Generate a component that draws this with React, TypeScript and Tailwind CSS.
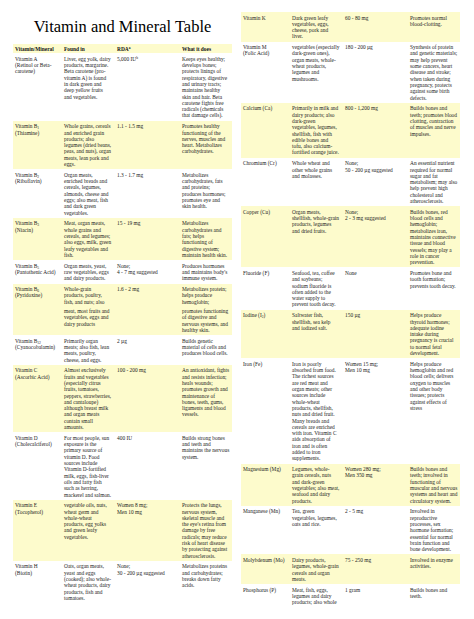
import type { ReactNode } from 'react';

type Line = string | ReactNode;
type Row = { cells: Line[][] };

const sub = (base: string, n: string, rest = '') => (
  <>
    {base}
    <span className="text-[3.6px] leading-none align-[-1px]">{n}</span>
    {rest}
  </>
);

const sup = (base: string, s: string) => (
  <>
    {base}
    <span className="text-[3.6px] leading-none align-[2px]">{s}</span>
  </>
);

// '' marks a small paragraph gap inside a cell
const leftRows: Row[] = [
  {
    cells: [
      ['Vitamin A', '(Retinol or Beta-', 'carotene)'],
      ['Liver, egg yolk, dairy', 'products, margarine.', 'Beta carotene (pro-', 'vitamin A) is found', 'in dark green and', 'deep yellow fruits', 'and vegetables.'],
      [sup('5,000 IU', 'b')],
      ['Keeps eyes healthy;', 'develops bones;', 'protects linings of', 'respiratory, digestive', 'and urinary tracts;', 'maintains healthy', 'skin and hair. Beta', 'carotene fights free', 'radicals (chemicals', 'that damage cells).'],
    ],
  },
  {
    cells: [
      [sub('Vitamin B', '1'), '(Thiamine)'],
      ['Whole grains, cereals', 'and enriched grain', 'products; also', 'legumes (dried beans,', 'peas, and nuts), organ', 'meats, lean pork and', 'eggs.'],
      ['1.1 - 1.5 mg'],
      ['Promotes healthy', 'functioning of the', 'nerves, muscles and', 'heart. Metabolizes', 'carbohydrates.'],
    ],
  },
  {
    cells: [
      [sub('Vitamin B', '2'), '(Riboflavin)'],
      ['Organ meats,', 'enriched breads and', 'cereals, legumes,', 'almonds, cheese and', 'eggs; also meat, fish', 'and dark green', 'vegetables.'],
      ['1.3 - 1.7 mg'],
      ['Metabolizes', 'carbohydrates, fats', 'and proteins;', 'produces hormones;', 'promotes eye and', 'skin health.'],
    ],
  },
  {
    cells: [
      [sub('Vitamin B', '3'), '(Niacin)'],
      ['Meat, organ meats,', 'whole grains and', 'cereals, and legumes;', 'also eggs, milk, green', 'leafy vegetables and', 'fish.'],
      ['15 - 19 mg'],
      ['Metabolizes', 'carbohydrates and', 'fats; helps', 'functioning of', 'digestive system;', 'maintain health skin.'],
    ],
  },
  {
    cells: [
      [sub('Vitamin B', '5'), '(Pantothenic Acid)'],
      ['Organ meats, yeast,', 'raw vegetables, eggs', 'and dairy products.'],
      ['None;', '4 - 7 mg suggested'],
      ['Produces hormones', "and maintains body's", 'immune system.'],
    ],
  },
  {
    cells: [
      [sub('Vitamin B', '6'), '(Pyridoxine)'],
      ['Whole-grain', 'products, poultry,', 'fish, and nuts; also', '', 'meat, most fruits and', 'vegetables, eggs and', 'dairy products'],
      ['1.6 - 2 mg'],
      ['Metabolizes protein;', 'helps produce', 'hemoglobin;', '', 'promotes functioning', 'of digestive and', 'nervous systems, and', 'healthy skin.'],
    ],
  },
  {
    cells: [
      [sub('Vitamin B', '12'), '(Cyanocobalamin)'],
      ['Primarily organ', 'meats; also fish, lean', 'meats, poultry,', 'cheese, and eggs.'],
      ['2 µg'],
      ['Builds genetic', 'material of cells and', 'produces blood cells.'],
    ],
  },
  {
    cells: [
      ['Vitamin C', '(Ascorbic Acid)'],
      ['Almost exclusively', 'fruits and vegetables', '(especially citrus', 'fruits, tomatoes,', 'peppers, strawberries,', 'and cantaloupe)', 'although breast milk', 'and organ meats', 'contain small', 'amounts.'],
      ['100 - 200 mg'],
      ['An antioxidant, fights', 'and resists infection;', 'heals wounds;', 'promotes growth and', 'maintenance of', 'bones, teeth, gums,', 'ligaments and blood', 'vessels.'],
    ],
  },
  {
    cells: [
      ['Vitamin D', '(Cholecalciferol)'],
      ['For most people, sun', 'exposure is the', 'primary source of', 'vitamin D. Food', 'sources include', 'Vitamin D-fortified', 'milk, eggs, fish-liver', 'oils and fatty fish', 'such as herring,', 'mackerel and salmon.'],
      ['400 IU'],
      ['Builds strong bones', 'and teeth and', 'maintains the nervous', 'system.'],
    ],
  },
  {
    cells: [
      ['Vitamin E', '(Tocopherol)'],
      ['vegetable oils, nuts,', 'wheat germ and', 'whole-wheat', 'products, egg yolks', 'and green leafy', 'vegetables.'],
      ['Women 8 mg;', 'Men 10 mg'],
      ['Protects the lungs,', 'nervous system,', 'skeletal muscle and', "the eye's retina from", 'damage by free', 'radicals; may reduce', 'risk of heart disease', 'by protecting against', 'atherosclerosis.'],
    ],
  },
  {
    cells: [
      ['Vitamin H', '(Biotin)'],
      ['Oats, organ meats,', 'yeast and eggs', '(cooked); also whole-', 'wheat products, dairy', 'products, fish and', 'tomatoes.'],
      ['None;', '30 - 200 µg suggested'],
      ['Metabolizes proteins', 'and carbohydrates;', 'breaks down fatty', 'acids.'],
    ],
  },
];

const rightRows: Row[] = [
  {
    cells: [
      ['Vitamin K'],
      ['Dark green leafy', 'vegetables, eggs,', 'cheese, pork and', 'liver.'],
      ['60 - 80 mg'],
      ['Promotes normal', 'blood-clotting.'],
    ],
  },
  {
    cells: [
      ['Vitamin M', '(Folic Acid)'],
      ['vegetables (especially', 'dark-green ones),', 'organ meats, whole-', 'wheat products,', 'legumes and', 'mushrooms.'],
      ['180 - 200 µg'],
      ['Synthesis of protein', 'and genetic materials;', 'may help prevent', 'some cancers, heart', 'disease and stroke;', 'when taken during', 'pregnancy, protects', 'against some birth', 'defects.'],
    ],
  },
  {
    cells: [
      ['Calcium (Ca)'],
      ['Primarily in milk and', 'dairy products; also', 'dark-green', 'vegetables, legumes,', 'shellfish, fish with', 'edible bones and', 'tofu, also calcium-', 'fortified orange juice.'],
      ['800 - 1,200 mg'],
      ['Builds bones and', 'teeth; promotes blood', 'clotting, contraction', 'of muscles and nerve', 'impulses.'],
    ],
  },
  {
    cells: [
      ['Chromium (Cr)'],
      ['Whole wheat and', 'other whole grains', 'and molasses.'],
      ['None;', '50 - 200 µg suggested'],
      ['An essential nutrient', 'required for normal', 'sugar and fat', 'metabolism; may also', 'help prevent high', 'cholesterol and', 'atherosclerosis.'],
    ],
  },
  {
    cells: [
      ['Copper (Cu)'],
      ['Organ meats,', 'shellfish, whole-grain', 'products, legumes', 'and dried fruits.'],
      ['None;', '2 - 3 mg suggested'],
      ['Builds bones, red', 'blood cells and', 'hemoglobin;', 'metabolizes iron,', 'maintains connective', 'tissue and blood', 'vessels; may play a', 'role in cancer', 'prevention.'],
    ],
  },
  {
    cells: [
      ['Fluoride (F)'],
      ['Seafood, tea, coffee', 'and soybeans;', 'sodium fluoride is', 'often added to the', 'water supply to', 'prevent tooth decay.'],
      ['None'],
      ['Promotes bone and', 'tooth formation;', 'prevents tooth decay.'],
    ],
  },
  {
    cells: [
      [sub('Iodine (I', '2', ')')],
      ['Saltwater fish,', 'shellfish, sea kelp', 'and iodized salt.'],
      ['150 µg'],
      ['Helps produce', 'thyroid hormones;', 'adequate iodine', 'intake during', 'pregnancy is crucial', 'to normal fetal', 'development.'],
    ],
  },
  {
    cells: [
      ['Iron (Fe)'],
      ['Iron is poorly', 'absorbed from food.', 'The richest sources', 'are red meat and', 'organ meats; other', 'sources include', 'whole-wheat', 'products, shellfish,', 'nuts and dried fruit.', 'Many breads and', 'cereals are enriched', 'with iron. Vitamin C', 'aids absorption of', 'iron and is often', 'added to iron', 'supplements.'],
      ['Women 15 mg;', 'Men 10 mg'],
      ['Helps produce', 'hemoglobin and red', 'blood cells; delivers', 'oxygen to muscles', 'and other body', 'tissues; protects', 'against effects of', 'stress'],
    ],
  },
  {
    cells: [
      ['Magnesium (Mg)'],
      ['Legumes, whole-', 'grain cereals, nuts', 'and dark-green', 'vegetables; also meat,', 'seafood and dairy', 'products.'],
      ['Women 280 mg;', 'Men 350 mg'],
      ['Builds bones and', 'teeth; involved in', 'functioning of', 'muscular and nervous', 'systems and heart and', 'circulatory system.'],
    ],
  },
  {
    cells: [
      ['Manganese (Mn)'],
      ['Tea, green', 'vegetables, legumes,', 'oats and rice.'],
      ['2 - 5 mg'],
      ['Involved in', 'reproductive', 'processes, sex', 'hormone formation;', 'essential for normal', 'brain function and', 'bone development.'],
    ],
  },
  {
    cells: [
      ['Molybdenum (Mo)'],
      ['Dairy products,', 'legumes, whole-grain', 'cereals and organ', 'meats.'],
      ['75 - 250 mg'],
      ['Involved in enzyme', 'activities.'],
    ],
  },
  {
    cells: [
      ['Phosphorus (P)'],
      ['Meat, fish, eggs,', 'legumes and dairy', 'products; also whole'],
      ['1 gram'],
      ['Builds bones and', 'teeth.'],
    ],
  },
];

function Cell({ lines }: { lines: Line[] }) {
  return (
    <div className="pl-[2px] pr-[1px] pt-[2.5px] pb-[2px] whitespace-nowrap">
      {lines.map((l, i) =>
        l === '' ? <div key={i} className="h-[3px]" /> : <div key={i} className="h-[6.3px]">{l}</div>
      )}
    </div>
  );
}

function Table({ rows, header }: { rows: Row[]; header?: boolean }) {
  return (
    <div className="w-[219px] text-[5.4px] leading-[6.3px]">
      {header && (
        <div className="grid grid-cols-[49px_53px_65px_52px] bg-[#fdfbcc] font-bold text-[#111]">
          <div className="pl-[2px] py-[1.5px]">Vitamin/Mineral</div>
          <div className="pl-[2px] py-[1.5px]">Found in</div>
          <div className="pl-[2px] py-[1.5px] h-[9.3px]">{sup('RDA', 'a')}</div>
          <div className="pl-[2px] py-[1.5px]">What it does</div>
        </div>
      )}
      {rows.map((r, i) => {
        const yellow = header ? i % 2 === 1 : i % 2 === 0;
        return (
          <div
            key={i}
            className={`grid grid-cols-[49px_53px_65px_52px] ${yellow ? 'bg-[#fdfbcc]' : 'bg-white'}`}
          >
            {r.cells.map((c, j) => (
              <Cell key={j} lines={c} />
            ))}
          </div>
        );
      })}
    </div>
  );
}

export default function App() {
  return (
    <div className="w-[474px] h-[619px] overflow-hidden bg-white flex font-['Liberation_Serif',serif] text-[#1c1c1c]">
      <div className="pl-[13px] pt-[17px] flex flex-col">
        <h1 className="w-[219px] text-center text-[16.5px] leading-[19px] text-black mb-[8px]">
          Vitamin and Mineral Table
        </h1>
        <Table rows={leftRows} header />
      </div>
      <div className="pl-[9px] pt-[12px]">
        <Table rows={rightRows} />
      </div>
    </div>
  );
}
